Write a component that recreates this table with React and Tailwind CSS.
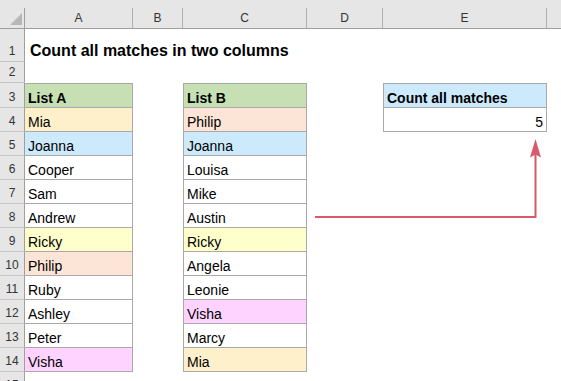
const GREEN = "bg-[#c6e0b4]";
const BLUE = "bg-[#cdeafc]";
const GOLD = "bg-[#fff0cc]";
const YELLOW = "bg-[#ffffcc]";
const PEACH = "bg-[#fce4d6]";
const PINK = "bg-[#ffd3ff]";

const listRows = [
  { n: 3, a: ["List A", GREEN], c: ["List B", GREEN], e: ["Count all matches", BLUE], head: true },
  { n: 4, a: ["Mia", GOLD], c: ["Philip", PEACH], e: ["5", "bg-white"], num: true },
  { n: 5, a: ["Joanna", BLUE], c: ["Joanna", BLUE] },
  { n: 6, a: ["Cooper"], c: ["Louisa"] },
  { n: 7, a: ["Sam"], c: ["Mike"] },
  { n: 8, a: ["Andrew"], c: ["Austin"] },
  { n: 9, a: ["Ricky", YELLOW], c: ["Ricky", YELLOW] },
  { n: 10, a: ["Philip", PEACH], c: ["Angela"] },
  { n: 11, a: ["Ruby"], c: ["Leonie"] },
  { n: 12, a: ["Ashley"], c: ["Visha", PINK] },
  { n: 13, a: ["Peter"], c: ["Marcy"] },
  { n: 14, a: ["Visha", PINK], c: ["Mia", GOLD] },
];

function RowHead({ n, className = "" }) {
  return (
    <div
      className={`w-[25px] shrink-0 bg-[#e6e6e6] border-r border-b border-r-[#9f9f9f] border-b-[#c4c4c4] flex items-end justify-center pb-[3px] text-[12px] leading-[14px] text-[#333] ${className}`}
    >
      {n}
    </div>
  );
}

function Cell({ text, bg = "bg-white", bold, right, className = "" }) {
  return (
    <div
      className={`h-full flex items-end pb-px px-[3px] leading-4 text-[14px] text-black whitespace-nowrap overflow-hidden border-b border-[#a9a9a9] ${bg} ${bold ? "font-bold" : ""} ${right ? "justify-end" : ""} ${className}`}
    >
      {text}
    </div>
  );
}

export default function App() {
  return (
    <div
      className="relative w-[561px] h-[381px] overflow-hidden bg-white"
      style={{ fontFamily: '"Liberation Sans", Arial, sans-serif' }}
    >
      {/* column letters */}
      <div className="flex h-[29px] pt-[8px] bg-[#e6e6e6] border-b border-[#9d9d9d] text-[12px] text-[#333]">
        <div className="relative w-[25px] shrink-0 border-r border-[#9f9f9f]">
          <svg className="absolute left-[10px] top-[5px]" width="12" height="12" viewBox="0 0 12 12">
            <path d="M12 0 V12 H0 Z" fill="#b7b7b7" />
          </svg>
        </div>
        <div className="w-[108px] shrink-0 border-r border-[#b0b0b0] flex items-center justify-center">A</div>
        <div className="w-[50px] shrink-0 border-r border-[#b0b0b0] flex items-center justify-center">B</div>
        <div className="w-[124px] shrink-0 border-r border-[#b0b0b0] flex items-center justify-center">C</div>
        <div className="w-[76px] shrink-0 border-r border-[#b0b0b0] flex items-center justify-center">D</div>
        <div className="w-[164px] shrink-0 border-r border-[#b0b0b0] flex items-center justify-center">E</div>
        <div className="flex-1" />
      </div>

      {/* row 1: title */}
      <div className="flex h-[33px]">
        <RowHead n={1} />
        <div className="flex items-end pb-[1px] pl-[5px] text-[16px] leading-5 font-bold text-black whitespace-nowrap">
          Count all matches in two columns
        </div>
      </div>

      {/* row 2 */}
      <div className="flex h-[21px]">
        <RowHead n={2} />
      </div>

      {listRows.map((r) => (
        <div key={r.n} className={`flex ${r.head ? "h-[25px]" : "h-[24px]"}`}>
          <RowHead n={r.n} />
          <Cell
            text={r.a[0]}
            bg={r.a[1]}
            bold={r.head}
            className={`w-[108px] shrink-0 border-r ${r.head ? "border-t" : ""}`}
          />
          <div className="w-[50px] shrink-0" />
          <Cell
            text={r.c[0]}
            bg={r.c[1]}
            bold={r.head}
            className={`w-[124px] shrink-0 border-l border-r ${r.head ? "border-t" : ""}`}
          />
          <div className="w-[76px] shrink-0" />
          {r.e ? (
            <Cell
              text={r.e[0]}
              bg={r.e[1]}
              bold={r.head}
              right={r.num}
              className={`w-[164px] shrink-0 border-l border-r ${r.head ? "border-t" : ""}`}
            />
          ) : (
            <div className="w-[164px] shrink-0" />
          )}
        </div>
      ))}

      <div className="flex h-[20px]">
        <RowHead n={15} className="items-start pt-[6px]" />
      </div>

      {/* connector arrow from list B to the result */}
      <svg className="absolute inset-0 pointer-events-none" width="561" height="381">
        <path d="M315 217 H535.5 V152" fill="none" stroke="#d95a6b" strokeWidth="2" />
        <path d="M535.5 139 L541 157.5 L535.5 154.5 L530 157.5 Z" fill="#d95a6b" />
      </svg>
    </div>
  );
}
